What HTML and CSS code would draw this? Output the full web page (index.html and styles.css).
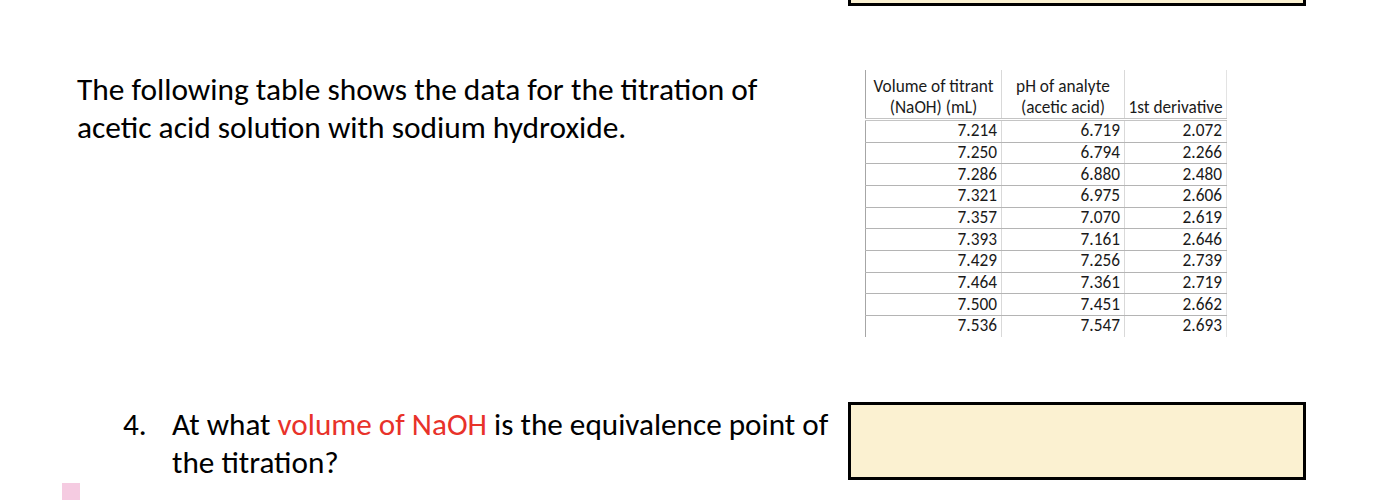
FILE: index.html
```html
<!DOCTYPE html>
<html>
<head>
<meta charset="utf-8">
<link rel="stylesheet" href="styles.css">
</head>
<body>
<div class="page">
  <div class="top-row">
    <div class="answer-box answer-box--cut"></div>
  </div>

  <div class="intro-row">
    <p class="intro-text">The following table shows the data for the titration of<br>acetic acid solution with sodium hydroxide.</p>
    <table class="data-table">
      <thead>
        <tr>
          <th class="c1">Volume of titrant<br>(NaOH) (mL)</th>
          <th class="c2">pH of analyte<br>(acetic acid)</th>
          <th class="c3">1st derivative</th>
        </tr>
      </thead>
      <tbody>
        <tr><td>7.214</td><td>6.719</td><td>2.072</td></tr>
        <tr><td>7.250</td><td>6.794</td><td>2.266</td></tr>
        <tr><td>7.286</td><td>6.880</td><td>2.480</td></tr>
        <tr><td>7.321</td><td>6.975</td><td>2.606</td></tr>
        <tr><td>7.357</td><td>7.070</td><td>2.619</td></tr>
        <tr><td>7.393</td><td>7.161</td><td>2.646</td></tr>
        <tr><td>7.429</td><td>7.256</td><td>2.739</td></tr>
        <tr><td>7.464</td><td>7.361</td><td>2.719</td></tr>
        <tr><td>7.500</td><td>7.451</td><td>2.662</td></tr>
        <tr class="last"><td>7.536</td><td>7.547</td><td>2.693</td></tr>
      </tbody>
    </table>
  </div>

  <div class="question-row">
    <div class="question">
      <span class="q-num">4.</span>
      <span class="q-text">At what <span class="hl">volume of NaOH</span> is the equivalence point of<br>the titration?</span>
    </div>
    <div class="answer-box answer-box--full"></div>
  </div>

  <div class="pink-mark"></div>
</div>
</body>
</html>
```

FILE: styles.css
```css
html, body {
  margin: 0;
  padding: 0;
  background: #ffffff;
}

.page {
  width: 1400px;
  height: 500px;
  overflow: hidden;
  font-family: Carlito, Lato, "Open Sans", sans-serif;
  color: #000;
}

.top-row {
  display: flex;
  padding-left: 848px;
}

.answer-box {
  box-sizing: border-box;
  width: 458px;
  background: #fbf1d1;
  border: 3px solid #000;
}

.answer-box--cut {
  height: 6px;
  border-top: none;
}

.answer-box--full {
  height: 78px;
}

.intro-row {
  display: flex;
  align-items: flex-start;
  margin-top: 64px;
}

.intro-text {
  margin: 0;
  width: 788px;
  padding-left: 77px;
  padding-top: 0;
  font-size: 31.4px;
  line-height: 38px;
  white-space: nowrap;
}

.data-table {
  border-collapse: collapse;
  font-size: 17.3px;
  color: #1a1a1a;
  border-left: 1px solid #a6a6a6;
}

.data-table th {
  font-weight: normal;
  text-align: center;
  vertical-align: bottom;
  line-height: 21px;
  height: 48px;
  padding: 0;
  border-bottom: 3px double #c4c4c4;
  border-right: 1px solid #d9d9d9;
  white-space: nowrap;
}

.data-table th.c1 { width: 135px; }
.data-table th.c2 { width: 122px; }
.data-table th.c3 { width: 101px; border-right: 1px solid #e3e3e3; }

.data-table td {
  text-align: right;
  padding: 0 4px 0 0;
  height: 20.67px;
  line-height: 20px;
  border-right: 1px solid #d9d9d9;
  border-bottom: 1px solid #b4b4b4;
}

.data-table td:last-child {
  border-right: 1px solid #e3e3e3;
}

.data-table tr.last td {
  border-bottom: none;
}

.question-row {
  display: flex;
  align-items: flex-start;
  margin-top: 65px;
}

.question {
  display: flex;
  width: 725px;
  padding-left: 123px;
  padding-top: 3px;
  font-size: 31.2px;
  line-height: 38px;
  white-space: nowrap;
}

.q-num {
  width: 49px;
  flex: none;
}

.hl {
  color: #e8322a;
}

.pink-mark {
  width: 18px;
  height: 18px;
  margin-left: 62px;
  margin-top: 2px;
  background: #f5cbe1;
}
```
